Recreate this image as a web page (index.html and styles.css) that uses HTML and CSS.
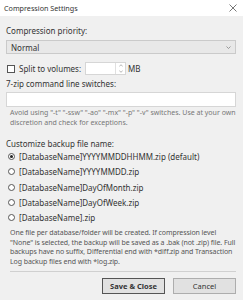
FILE: index.html
```html
<!DOCTYPE html>
<html lang="en">
<head>
  <meta charset="UTF-8" />
  <title>Compression Settings</title>
  <link rel="stylesheet" href="styles.css">
</head>
<body>
<div class="dialog">
  <div class="titlebar">
    <span class="title">Compression Settings</span>
    <svg class="close" width="8" height="8" viewBox="0 0 8 8"><path d="M0.5 0.5 L7.5 7.5 M7.5 0.5 L0.5 7.5" stroke="#555" stroke-width="0.8"/></svg>
  </div>

  <div class="content">
    <div class="label">Compression priority:</div>
    <div class="select">
      <span>Normal</span>
      <svg width="5" height="3" viewBox="0 0 5 3"><path d="M0.5 0.5 L2.5 2.5 L4.5 0.5" fill="none" stroke="#777" stroke-width="0.7"/></svg>
    </div>

    <div class="split-row">
      <span class="checkbox"></span>
      <span>Split to volumes:</span>
      <div class="spin">
        <div class="spin-field"></div>
        <div class="spin-btns">
          <svg width="4" height="3" viewBox="0 0 4 3"><path d="M0.3 2.5 L2 0.7 L3.7 2.5" fill="none" stroke="#888" stroke-width="0.6"/></svg>
          <svg width="4" height="3" viewBox="0 0 4 3"><path d="M0.3 0.5 L2 2.3 L3.7 0.5" fill="none" stroke="#888" stroke-width="0.6"/></svg>
        </div>
      </div>
      <span>MB</span>
    </div>

    <div class="label">7-zip command line switches:</div>
    <div class="textbox"></div>
    <p class="hint">Avoid using "-t" "-ssw" "-ao" "-mx" "-p" "-v" switches. Use at your own discretion and check for exceptions.</p>

    <div class="label section">Customize backup file name:</div>
    <div class="radios">
      <label class="radio"><span class="dot checked"></span>[DatabaseName]YYYYMMDDHHMM.zip (default)</label>
      <label class="radio"><span class="dot"></span>[DatabaseName]YYYYMMDD.zip</label>
      <label class="radio"><span class="dot"></span>[DatabaseName]DayOfMonth.zip</label>
      <label class="radio"><span class="dot"></span>[DatabaseName]DayOfWeek.zip</label>
      <label class="radio"><span class="dot"></span>[DatabaseName].zip</label>
    </div>

    <p class="note">One file per database/folder will be created. If compression level "None" is selected, the backup will be saved as a .bak (not .zip) file. Full backups have no suffix, Differential end with *diff.zip and Transaction Log backup files end with *log.zip.</p>

    <div class="footer">
      <button class="btn primary">Save &amp; Close</button>
      <button class="btn">Cancel</button>
    </div>
  </div>
</div>
</body>
</html>
```

FILE: styles.css
```css
body {
  margin: 0;
  font-family: "Noto Sans", "Open Sans", sans-serif;
  font-size: 8px;
  color: #333;
  background: #f0f0f0;
}
.dialog {
  width: 243px;
  height: 300px;
  display: flex;
  flex-direction: column;
}
.titlebar {
  height: 16px;
  background: #fff;
  display: flex;
  align-items: center;
  justify-content: space-between;
  padding: 0 6px 0 4px;
}
.title {
  font-size: 7.2px;
  color: #333;
}
.content {
  padding: 6px 7px 0 6px;
  display: flex;
  flex-direction: column;
}
.label {
  height: 12px;
  line-height: 12px;
  margin-top: 3px;
}
.select {
  margin-top: 3px;
  height: 12px;
  border: 1px solid #cacaca;
  background: #e8e8e8;
  display: flex;
  align-items: center;
  justify-content: space-between;
  padding: 0 4px;
}
.split-row {
  display: flex;
  align-items: center;
  margin-top: 8px;
  height: 13px;
  padding-left: 1px;
}
.checkbox {
  width: 8px;
  height: 8px;
  border: 1px solid #555;
  background: #fff;
  box-sizing: border-box;
  margin-right: 4px;
}
.spin {
  display: flex;
  height: 13px;
  width: 41px;
  margin: 0 2px 0 4px;
  border: 1px solid #d6d6d6;
  background: #fff;
  box-sizing: border-box;
}
.spin-field {
  flex: 1;
}
.spin-btns {
  width: 9px;
  display: flex;
  flex-direction: column;
  align-items: center;
  justify-content: space-around;
  border-left: 1px solid #e0e0e0;
}
.textbox {
  margin-top: 2px;
  height: 13px;
  border: 1px solid #d6d6d6;
  background: #fff;
}
.hint {
  margin: 1px 0 0 4px;
  line-height: 10px;
  font-size: 7px;
  color: #777;
}
.section {
  margin-top: 10px;
}
.radios {
  display: flex;
  flex-direction: column;
  margin-top: -1px;
}
.radio {
  display: flex;
  align-items: center;
  height: 15.3px;
  padding-left: 2px;
}
.dot {
  width: 7px;
  height: 7px;
  border: 1px solid #555;
  border-radius: 50%;
  background: #fff;
  box-sizing: border-box;
  margin-right: 4px;
  display: flex;
  align-items: center;
  justify-content: center;
}
.dot.checked::after {
  content: "";
  width: 3px;
  height: 3px;
  border-radius: 50%;
  background: #222;
}
.note {
  margin: 3px 0 0 4px;
  line-height: 9.5px;
  font-size: 7px;
  letter-spacing: -0.08px;
  color: #555;
  padding-bottom: 5px;
  border-bottom: 1px solid #d0d0d0;
}
.footer {
  display: flex;
  justify-content: flex-end;
  gap: 8px;
  margin-top: 6px;
}
.btn {
  font-family: inherit;
  font-size: 7.5px;
  width: 63px;
  height: 16px;
  padding: 0;
  border: 1px solid #adadad;
  background: #e1e1e1;
  color: #333;
}
.btn.primary {
  font-weight: bold;
  border-color: #555;
}
```
